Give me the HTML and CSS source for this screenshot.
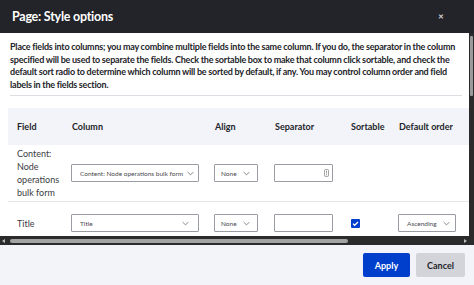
FILE: index.html
```html
<!DOCTYPE html>
<html>
<head>
<meta charset="utf-8">
<link rel="stylesheet" href="styles.css">
</head>
<body>
<div class="dialog">
  <header class="titlebar">
    <h1 class="title">Page: Style options</h1>
    <span class="close">&#x2715;</span>
  </header>
  <div class="viewport">
    <div class="main">
      <div class="content">
        <p class="desc">Place fields into columns; you may combine multiple fields into the same column. If you do, the separator in the column specified will be used to separate the fields. Check the sortable box to make that column click sortable, and check the default sort radio to determine which column will be sorted by default, if any. You may control column order and field labels in the fields section.</p>
        <hr class="rule">
        <div class="grid">
          <div class="th">Field</div>
          <div class="th">Column</div>
          <div class="th">Align</div>
          <div class="th">Separator</div>
          <div class="th">Sortable</div>
          <div class="th">Default order</div>

          <div class="td field r1">Content: Node operations bulk form</div>
          <div class="td r1"><div class="select w-col"><span>Content: Node operations bulk form</span><svg class="chev" viewBox="0 0 10 6"><path d="M1 1l4 4 4-4" fill="none" stroke="#555" stroke-width="1"/></svg></div></div>
          <div class="td r1"><div class="select w-align"><span>None</span><svg class="chev" viewBox="0 0 10 6"><path d="M1 1l4 4 4-4" fill="none" stroke="#555" stroke-width="1"/></svg></div></div>
          <div class="td r1"><div class="input"><svg class="keyicon" viewBox="0 0 6 9"><rect x="0.5" y="0.5" width="5" height="8" rx="1" fill="none" stroke="#888"/><rect x="2.5" y="2" width="1" height="3" fill="#888"/><rect x="2.5" y="6" width="1" height="1" fill="#888"/></svg></div></div>
          <div class="td r1"></div>
          <div class="td r1"></div>

          <div class="td field r2">Title</div>
          <div class="td r2"><div class="select w-col wide"><span>Title</span><svg class="chev" viewBox="0 0 10 6"><path d="M1 1l4 4 4-4" fill="none" stroke="#555" stroke-width="1"/></svg></div></div>
          <div class="td r2"><div class="select w-align"><span>None</span><svg class="chev" viewBox="0 0 10 6"><path d="M1 1l4 4 4-4" fill="none" stroke="#555" stroke-width="1"/></svg></div></div>
          <div class="td r2"><div class="input"></div></div>
          <div class="td r2"><span class="check"><svg viewBox="0 0 9 9"><path d="M2 4.6l1.7 1.7L7 3" fill="none" stroke="#fff" stroke-width="1.3"/></svg></span></div>
          <div class="td r2"><div class="select w-order"><span>Ascending</span><svg class="chev" viewBox="0 0 10 6"><path d="M1 1l4 4 4-4" fill="none" stroke="#555" stroke-width="1"/></svg></div></div>
        </div>
      </div>
      <div class="hscroll">
        <span class="arrow-l"></span>
        <div class="hthumb"></div>
        <span class="arrow-r"></span>
      </div>
    </div>
    <div class="vscroll"><div class="vthumb"></div></div>
  </div>
  <footer class="actions">
    <button class="btn primary">Apply</button>
    <button class="btn secondary">Cancel</button>
  </footer>
</div>
</body>
</html>
```
FILE: styles.css
```css
* { box-sizing: border-box; }
html, body { margin: 0; padding: 0; }
body {
  width: 474px;
  height: 285px;
  overflow: hidden;
  font-family: Lato, "Noto Sans", sans-serif;
  color: #232429;
  background: #fff;
}
.dialog {
  display: flex;
  flex-direction: column;
  height: 285px;
}
.titlebar {
  height: 33px;
  flex: none;
  background: #232429;
  display: flex;
  align-items: center;
  justify-content: space-between;
  padding: 0 30px 0 12px;
}
.title {
  margin: 0;
  color: #fff;
  font-size: 12.5px;
  font-weight: 700;
  letter-spacing: -0.25px;
}
.close {
  color: #c9cad0;
  font-size: 7px;
  font-weight: 700;
}
.viewport {
  height: 212px;
  flex: none;
  display: flex;
}
.main {
  flex: 1;
  min-width: 0;
  display: flex;
  flex-direction: column;
}
.content {
  height: 203px;
  overflow: hidden;
  padding: 8px 0 0 10px;
}
.desc {
  margin: 0;
  width: 456px;
  font-size: 9px;
  font-weight: 700;
  line-height: 12.5px;
  letter-spacing: -0.2px;
  word-spacing: -0.2px;
}
.rule {
  margin: 4px 0 0 0;
  width: 452px;
  border: 0;
  border-top: 1px solid #dedfe4;
}
.grid {
  margin: 12px 0 0 -2px;
  width: 490px;
  display: grid;
  grid-template-columns: 55px 143px 60px 76px 48px 108px;
  grid-template-rows: 37px 57px 42px;
}
.th {
  background: #f3f4f9;
  font-size: 9px;
  font-weight: 700;
  display: flex;
  align-items: center;
  padding-left: 9px;
}
.td {
  font-size: 9px;
  display: flex;
  align-items: center;
  padding-left: 8px;
  color: #3b3c42;
}
.td.field { padding-left: 9px; padding-right: 4px; line-height: 13px; }
.r1 { border-bottom: 1px solid #e6e7eb; }
.select, .input {
  height: 18px;
  border: 1px solid #9a9ca3;
  border-radius: 1px;
  background: #fff;
  display: flex;
  align-items: center;
  font-size: 6.5px;
  color: #4a4b50;
}
.select { padding: 0 6px 0 8px; gap: 4px; }
.select span { white-space: nowrap; }
.w-col { width: 128px; }
.wide { justify-content: space-between; padding-right: 9px; }
.w-align { width: 44px; padding-left: 6px; gap: 6px; }
.w-order { width: 58px; padding-left: 8px; gap: 6px; }
.chev { width: 7px; height: 5px; flex: none; }
.input { width: 59px; justify-content: flex-end; padding-right: 3px; }
.keyicon { width: 5px; height: 8px; }
.check {
  margin-left: 1px;
  width: 9px;
  height: 9px;
  background: #003ecc;
  border-radius: 1px;
  display: flex;
}
.check svg { width: 9px; height: 9px; }
.hscroll {
  height: 9px;
  background: #2b2b2b;
  display: flex;
  align-items: center;
  padding: 0 2px;
}
.arrow-l, .arrow-r {
  width: 0; height: 0;
  border-top: 2px solid transparent;
  border-bottom: 2px solid transparent;
}
.arrow-l { border-right: 3px solid #bbb; }
.arrow-r { border-left: 3px solid #bbb; margin-left: auto; }
.hthumb {
  margin-left: 5px;
  width: 338px;
  height: 4px;
  border-radius: 2px;
  background: #a3a3a3;
}
.vscroll {
  width: 5px;
  flex: none;
  background: #2b2b2b;
  padding-top: 3px;
}
.vthumb {
  width: 3px;
  height: 60px;
  margin-left: 1px;
  background: #9b9b9b;
  border-radius: 1px;
}
.actions {
  height: 40px;
  flex: none;
  background: #f3f4f9;
  display: flex;
  align-items: center;
  justify-content: flex-end;
  gap: 6px;
  padding: 0 9px 0 0;
}
.btn {
  height: 24px;
  border: 0;
  border-radius: 2px;
  font-family: inherit;
  font-size: 9px;
  font-weight: 700;
  padding: 0;
}
.primary { width: 47px; background: #003ecc; color: #fff; }
.secondary { width: 49px; background: #d3d4d9; color: #232429; }
```
